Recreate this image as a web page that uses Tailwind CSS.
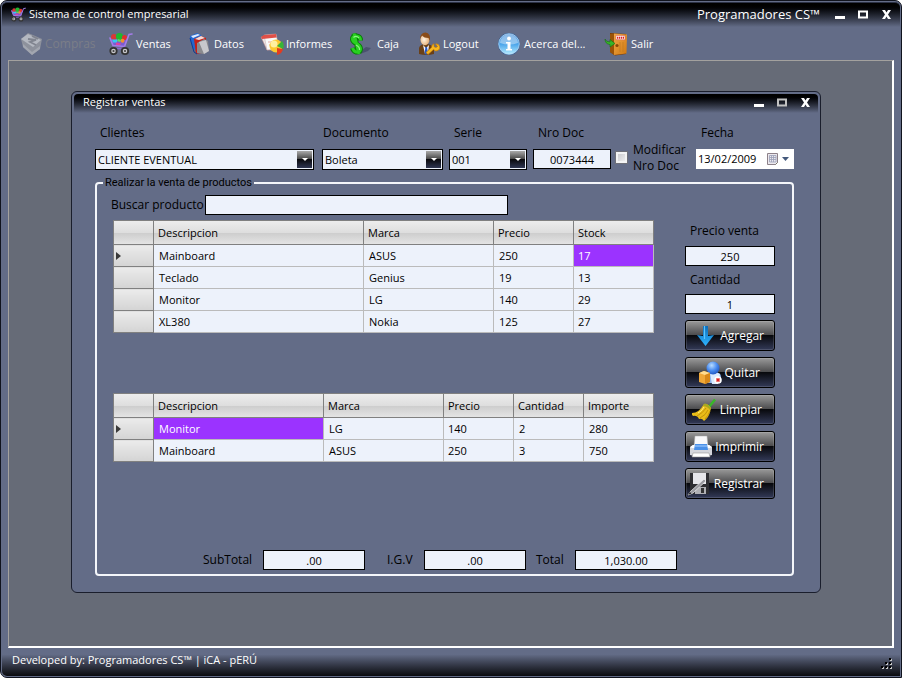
<!DOCTYPE html>
<html lang="es">
<head>
<meta charset="utf-8">
<title>Sistema de control empresarial</title>
<script src="https://cdn.jsdelivr.net/npm/@tailwindcss/browser@4"></script>
</head>
<body class="flex min-h-screen bg-white text-[12px] leading-4 text-black" style="font-family:'Open Sans','Noto Sans',sans-serif">
<svg class="absolute h-0 w-0" aria-hidden="true">
  <defs>
    <linearGradient id="gBlue" x1="0" y1="0" x2="0" y2="1"><stop offset="0" stop-color="#3a86d4"/><stop offset=".5" stop-color="#4aa4ea"/><stop offset="1" stop-color="#b4ecff"/></linearGradient>
    <linearGradient id="gArrow" x1="0" y1="0" x2="0" y2="1"><stop offset="0" stop-color="#0c6cb8"/><stop offset="1" stop-color="#2fb4ff"/></linearGradient>
    <linearGradient id="gDoor" x1="0" y1="0" x2="1" y2="1"><stop offset="0" stop-color="#f0a848"/><stop offset="1" stop-color="#d07810"/></linearGradient>
    <radialGradient id="gBall" cx=".4" cy=".3" r=".8"><stop offset="0" stop-color="#b8dcff"/><stop offset=".5" stop-color="#4a8cf0"/><stop offset="1" stop-color="#1448b8"/></radialGradient>
    <radialGradient id="gFace" cx=".4" cy=".5" r=".7"><stop offset="0" stop-color="#fff4e4"/><stop offset="1" stop-color="#e0a060"/></radialGradient>
    <symbol id="cart" viewBox="0 0 24 24">
      <path d="M1 6h18l-3.500 8.500-11.500-1z" fill="#7a5cd0"/>
      <circle cx="5" cy="5" r="3" fill="#d83838"/><circle cx="10.500" cy="4.500" r="3.600" fill="#20b830"/><circle cx="15.500" cy="5.500" r="2.600" fill="#e03030"/>
      <path d="M3 7.500h5v3H4z" fill="#38c8f0"/><circle cx="13.500" cy="8.800" r="2" fill="#f0902c"/><path d="M7 10.500l5 1-1 2-4-.5z" fill="#e040a0"/><path d="M9 7l3 1-1 2-3-1z" fill="#60d860"/>
      <path d="M23 2l-3 .5-4.500 12L4 13.500 1 6" fill="none" stroke="#a47ce8" stroke-width="1.600" stroke-linecap="round"/>
      <path d="M15.500 14.500l1 2H3" fill="none" stroke="#8a68d0" stroke-width="1.400"/>
      <circle cx="4.500" cy="19" r="3.200" fill="#c8c8cc" stroke="#333" stroke-width="1.800"/><circle cx="16" cy="19" r="3.200" fill="#c8c8cc" stroke="#333" stroke-width="1.800"/>
      <circle cx="4.500" cy="19" r="1.100" fill="#444"/><circle cx="16" cy="19" r="1.100" fill="#444"/>
    </symbol>
  </defs>
</svg>

<div class="flex flex-1 flex-col rounded-[7px] rounded-br-none border border-[#10131d] bg-[#636c87] p-px">
  <header class="flex h-[25px] items-center rounded-t-[5px] border-t border-[#2b3145] bg-linear-to-b from-black to-[#636c87] pr-1.5 pb-0.5 pl-[9px] text-white">
    <svg class="h-[15px] w-[15px]"><use href="#cart"/></svg>
    <h1 class="ml-[3px] flex-1 text-[11px]">Sistema de control empresarial</h1>
    <span class="text-[13px]">Programadores CS™</span>
    <button type="button" aria-label="Minimizar" class="ml-3 flex h-4 w-4 items-center justify-center"><svg class="h-[9px] w-[10px]" viewBox="0 0 10 9"><path d="M0 6h10v3H0z" fill="#fff"/></svg></button>
    <button type="button" aria-label="Maximizar" class="ml-[7px] flex h-4 w-4 items-center justify-center"><svg class="h-[9px] w-[10px]" viewBox="0 0 10 9"><path d="M1 1.500h8v6H1z" fill="none" stroke="#fff" stroke-width="2"/></svg></button>
    <button type="button" aria-label="Cerrar" class="ml-[7px] flex h-4 w-4 items-center justify-center"><svg class="h-[9px] w-[9px]" viewBox="0 0 9 9"><path d="M0 0h3l1.500 2.500L6 0h3L6 4.500 9 9H6L4.500 6.500 3 9H0l3-4.500z" fill="#fff"/></svg></button>
  </header>

  <nav aria-label="Principal" class="grid h-[33px] grid-cols-[89px_79px_72px_88px_68px_81px_107px_auto] items-center justify-start pl-[18px] text-[11px] text-white">
    <button type="button" disabled class="flex items-center gap-px text-[12px] text-[#7b7e88]">
      <svg class="h-6 w-6" viewBox="0 0 24 24"><path d="M1 7L8 1l5 2 9 4-2 10-8 6L3 15z" fill="#8d919c"/><path d="M1 7l7-5 13 6-8 7z" fill="#b4b8c1"/><path d="M3 12l9 8 8-6v3l-8 6-9-8z" fill="#a2a6b0"/><path d="M8 7l8 1-6 2 6 3M12 4l6 3" stroke="#80848f" stroke-width="1.800" fill="none"/></svg>
      Compras</button>
    <button type="button" class="flex items-center gap-[3px]"><svg class="h-6 w-6"><use href="#cart"/></svg>Ventas</button>
    <button type="button" class="flex items-center gap-[2px]">
      <svg class="h-6 w-6" viewBox="0 0 24 24"><path d="M2 4l7-3 4 2 1 2-3 14-6-2-3-9z" fill="#2268d0"/><path d="M3 4l7-2 2 1-7 3z" fill="#dfeaff"/><path d="M6 7l7-3 5 2v3l-4 12-6 1z" fill="#c42018"/><path d="M7 7l6-3 4 2-6 2z" fill="#f4dcd8"/><path d="M9 11l7-4 4 2 1 10-5 3-7-1z" fill="#8a8a8e"/><path d="M11 10l7-2 3 11-5 3z" fill="#c8c8cc"/><path d="M2 6l4 14 3 2" stroke="#103c90" stroke-width="1" fill="none"/></svg>
      Datos</button>
    <button type="button" class="flex items-center gap-[2px]">
      <svg class="h-6 w-6" viewBox="0 0 24 24"><path d="M1 5l6 13h8V5z" fill="#ece8e8" stroke="#c89090" stroke-width=".6"/><path d="M4 3l12-1 3 14-12 2z" fill="#fafafa" stroke="#c8a8a8" stroke-width=".5"/><path d="M1 5l3-2 12-1 .7 3.500-12 1.200L2 7z" fill="#e05048"/><path d="M8 10h7M9 13h4" stroke="#e8a8a0"/><circle cx="16" cy="14" r="6.500" fill="#fcc830"/><circle cx="14" cy="12" r="3.500" fill="#fff0a0"/><path d="M17 14l5-5q3 4 1 8z" fill="#38b438"/><path d="M17 16l6 1q-1 5-6 6z" fill="#e43c20"/></svg>
      Informes</button>
    <button type="button" class="flex items-center gap-[5px]">
      <svg class="h-6 w-6" viewBox="0 0 24 24"><path d="M10 21l8-6 5 1-3 3-8 3z" fill="#4a526e"/><path d="M12.500 8.500q0-4-4-4.500-4.500 0-4 3.500.5 2.500 4 4 4 2.500 4 5.500-.5 3.500-4.500 3Q5.500 19 4.500 16M6 1.500l5 20.500" fill="none" stroke="#087c08" stroke-width="5"/><path d="M12.500 8.500q0-4-4-4.500-4.500 0-4 3.500.5 2.500 4 4 4 2.500 4 5.500-.5 3.500-4.500 3Q5.500 19 4.500 16M6 1.500l5 20.500" fill="none" stroke="#28d020" stroke-width="3"/><path d="M11 6Q8 3 5.500 5.500M8 13q4 2 3.500 5" fill="none" stroke="#8cf880" stroke-width="1.200"/></svg>
      Caja</button>
    <button type="button" class="flex items-center gap-[3px]">
      <svg class="h-6 w-6" viewBox="0 0 24 24"><path d="M3 22V16q1-4 7-4t8 5v5q-8 2-15 0z" fill="#6a4018"/><path d="M7 13l3 3 3-3-1 9H9z" fill="#f4f4ff"/><path d="M9.500 15h1.500l1 6-2 2-1.500-2z" fill="#2058c8"/><ellipse cx="9" cy="7.500" rx="4.500" ry="5.700" fill="url(#gFace)"/><path d="M4 7q0-6 5.500-6.500Q15 1 14 9l-1.500-3Q8 6 6 3.500z" fill="#8a4c18"/><path d="M19.500 12a3.500 3.500 0 1 1-2 5.500l-5.500 5-2-2 5.500-5q0-3 2.500-3.800v3l2 .8 1.500-1z" fill="#f8b820" stroke="#c07808" stroke-width=".7"/></svg>
      Logout</button>
    <button type="button" class="flex items-center gap-[3px]">
      <svg class="h-6 w-6" viewBox="0 0 24 24"><circle cx="12" cy="12" r="11" fill="#2a5c98"/><circle cx="12" cy="12" r="10.300" fill="url(#gBlue)" stroke="#b8d8f4" stroke-width=".8"/><path d="M3 11a9 9 0 0 1 18 0q-9 3-18 0z" fill="#fff" opacity=".4"/><circle cx="12" cy="6.500" r="1.900" fill="#fff"/><path d="M9 10h4.500v7H15v1.500H9V17h1.500v-5.500H9z" fill="#fff"/></svg>
      Acerca del...</button>
    <button type="button" class="flex items-center gap-[3px]">
      <svg class="h-6 w-6" viewBox="0 0 24 24"><path d="M6 1l16 1v20l-11 1.500L6 20z" fill="#7c3c04"/><path d="M10 1.500l13 1-.5 19L10 23z" fill="url(#gDoor)"/><path d="M10 1.500L6 2v18l4 3z" fill="#9c5408"/><path d="M12 3.500l9 .3v4l-9-.2z" fill="#fff" stroke="#e06060" stroke-width=".6"/><path d="M13 5.700h7" stroke="#e02020" stroke-width="2" stroke-dasharray="1.300 .6"/><circle cx="13" cy="13.500" r="1.600" fill="#8a4808"/><path d="M16 10v10M19 10v10" stroke="#c07820" stroke-width=".7"/><path d="M1 7q1 3 5 3V7.500l5 4L6 15v-2.500Q1 12 1 7z" fill="#38b428" stroke="#147010" stroke-width=".6"/></svg>
      Salir</button>
  </nav>

  <main class="mx-1.5 flex-1 border-2 border-t border-l border-t-[#a3a19e] border-r-white border-b-white border-l-[#a3a19e] bg-[#666b77] pt-[30px] pr-[71px] pb-[52px] pl-[62px]">
    <section aria-label="Registrar ventas" class="rounded-[6px] border border-[#1a1e2c] bg-[#636c87]">
      <header class="mx-0.5 mt-0.5 flex h-[19px] items-start rounded-t-[4px] bg-linear-to-b from-black to-[#636c87] pr-[5px] pl-[9px] text-white">
        <h2 class="flex-1 text-[11px]">Registrar ventas</h2>
        <button type="button" aria-label="Minimizar" class="flex h-4 w-4 items-center justify-center"><svg class="h-[9px] w-[10px]" viewBox="0 0 10 9"><path d="M0 6h10v3H0z" fill="#fff"/></svg></button>
        <button type="button" aria-label="Maximizar" class="ml-[7px] flex h-4 w-4 items-center justify-center"><svg class="h-[9px] w-[10px]" viewBox="0 0 10 9"><path d="M1 1.500h8v6H1z" fill="none" stroke="#c2c2c2" stroke-width="2"/></svg></button>
        <button type="button" aria-label="Cerrar" class="ml-[7px] flex h-4 w-4 items-center justify-center"><svg class="h-[9px] w-[9px]" viewBox="0 0 9 9"><path d="M0 0h3l1.500 2.500L6 0h3L6 4.500 9 9H6L4.500 6.500 3 9H0l3-4.500z" fill="#fff"/></svg></button>
      </header>

      <form class="pr-[26px] pb-4 pl-[23px]">
        <div class="flex items-end pt-3">
          <div class="flex-1">
            <label for="clientes" class="mb-2 block pl-[5px]">Clientes</label>
            <div class="relative">
              <select id="clientes" class="block h-[21px] w-full appearance-none border border-black bg-[#edf2fb] pl-0.5 text-[11px]"><option>CLIENTE EVENTUAL</option></select>
              <svg class="pointer-events-none absolute top-0.5 right-0.5 h-[17px] w-[15px] bg-[linear-gradient(#aaa,#444_48%,#0a0a0e_50%,#2f3652)]" viewBox="0 0 15 17"><path d="M5 7h6L8 10z" fill="#fff"/></svg>
            </div>
          </div>
          <div class="ml-2 w-[121px]">
            <label for="documento" class="mb-2 block pl-px">Documento</label>
            <div class="relative">
              <select id="documento" class="block h-[21px] w-full appearance-none border border-black bg-[#edf2fb] pl-0.5 text-[11px]"><option>Boleta</option></select>
              <svg class="pointer-events-none absolute top-0.5 right-0.5 h-[17px] w-[15px] bg-[linear-gradient(#aaa,#444_48%,#0a0a0e_50%,#2f3652)]" viewBox="0 0 15 17"><path d="M5 7h6L8 10z" fill="#fff"/></svg>
            </div>
          </div>
          <div class="ml-1.5 w-[78px]">
            <label for="serie" class="mb-2 block pl-[5px]">Serie</label>
            <div class="relative">
              <select id="serie" class="block h-[21px] w-full appearance-none border border-black bg-[#edf2fb] pl-0.5 text-[11px]"><option>001</option></select>
              <svg class="pointer-events-none absolute top-0.5 right-0.5 h-[17px] w-[15px] bg-[linear-gradient(#aaa,#444_48%,#0a0a0e_50%,#2f3652)]" viewBox="0 0 15 17"><path d="M5 7h6L8 10z" fill="#fff"/></svg>
            </div>
          </div>
          <div class="ml-1.5 w-[78px] pb-px">
            <label for="nrodoc" class="mb-2 block pl-[5px]">Nro Doc</label>
            <input id="nrodoc" type="text" value="0073444" class="block h-5 w-full border border-black bg-[#edf2fb] text-center text-[11px]">
          </div>
          <div class="ml-1 flex w-[81px] items-start gap-[5px]">
            <input id="modificar" type="checkbox" class="mt-[9px] h-[13px] w-[13px] shrink-0 appearance-none border border-[#6f7078] bg-linear-to-br from-[#c4c4c8] to-[#f6f6f6] shadow-[inset_0_0_0_2px_#f4f4f4] checked:bg-[#9b33ff]">
            <label for="modificar" class="-mb-1">Modificar<br>Nro Doc</label>
          </div>
          <div class="w-[98px] pb-px">
            <label for="fecha" class="mb-2 block pl-[5px]">Fecha</label>
            <div class="flex h-5 items-center bg-white pr-1.5">
              <input id="fecha" type="text" value="13/02/2009" class="w-[68px] pl-[2px] text-[11px]">
              <button type="button" aria-label="Abrir calendario" class="ml-[3px] flex items-center gap-[3px]">
                <svg class="h-[13px] w-3" viewBox="0 0 12 13"><path d="M.5.500h10v9l-2 2h-8z" fill="#ece9ee" stroke="#8d8189"/><path d="M2.500 2.500h6.500v6.500H2.500zM4.500 2.500v6.500M6.500 2.500v6.500M2.500 4.500h6.500M2.500 6.500h6.500" fill="none" stroke="#9aa0b8" stroke-width=".8"/><path d="M8.500 11.500l2-2" stroke="#776"/></svg>
                <svg class="h-1 w-[7px]" viewBox="0 0 7 4"><path d="M0 0h7L3.500 4z" fill="#44597c"/></svg>
              </button>
            </div>
          </div>
        </div>

        <fieldset class="mt-[5px] rounded-[4px] border-2 border-[#f4f6fa] pb-1">
          <legend class="ml-1.5 px-0.5 text-[11px]" style="font-family:Roboto,'Open Sans',sans-serif">Realizar la venta de productos</legend>
          <div class="flex">
            <div class="flex-1 pl-4">
              <div class="mt-1 flex items-center">
                <label for="buscar" class="-ml-0.5 w-[94px] whitespace-nowrap">Buscar producto</label>
                <input id="buscar" type="text" class="h-5 w-[303px] border border-black bg-[#edf2fb] px-1 text-[11px]">
              </div>
              <table class="mt-[5px] w-full table-fixed border-collapse text-left text-[11px]">
                <colgroup><col class="w-10"><col class="w-[210px]"><col class="w-[130px]"><col class="w-20"><col class="w-20"></colgroup>
                <thead>
                  <tr class="h-6 bg-[linear-gradient(#ededed,#dedede_48%,#cdcdcd_50%,#e6e6e6)]">
                    <th class="border border-[#808080]"></th>
                    <th class="border border-[#808080] px-1 font-normal">Descripcion</th>
                    <th class="border border-[#808080] px-1 font-normal">Marca</th>
                    <th class="border border-[#808080] px-1 font-normal">Precio</th>
                    <th class="border border-[#808080] px-1 font-normal">Stock</th>
                  </tr>
                </thead>
                <tbody class="bg-[#edf2fb]">
                  <tr class="h-[22px]"><th class="border border-[#808080] bg-linear-to-b from-[#ebebeb] to-[#d4d4d4] pl-0.5"><svg class="h-2 w-[5px]" viewBox="0 0 5 8"><path d="M0 0l5 4-5 4z" fill="#3a3a3a"/></svg></th><td class="border border-[#bbb] px-[5px]">Mainboard</td><td class="border border-[#bbb] px-[5px]">ASUS</td><td class="border border-[#bbb] px-[5px]">250</td><td class="border border-[#bbb] bg-[#9b33ff] px-1 text-white">17</td></tr>
                  <tr class="h-[22px]"><th class="border border-[#808080] bg-linear-to-b from-[#ebebeb] to-[#d4d4d4]"></th><td class="border border-[#bbb] px-[5px]">Teclado</td><td class="border border-[#bbb] px-[5px]">Genius</td><td class="border border-[#bbb] px-[5px]">19</td><td class="border border-[#bbb] px-1">13</td></tr>
                  <tr class="h-[22px]"><th class="border border-[#808080] bg-linear-to-b from-[#ebebeb] to-[#d4d4d4]"></th><td class="border border-[#bbb] px-[5px]">Monitor</td><td class="border border-[#bbb] px-[5px]">LG</td><td class="border border-[#bbb] px-[5px]">140</td><td class="border border-[#bbb] px-1">29</td></tr>
                  <tr class="h-[22px]"><th class="border border-[#808080] bg-linear-to-b from-[#ebebeb] to-[#d4d4d4]"></th><td class="border border-[#bbb] px-[5px]">XL380</td><td class="border border-[#bbb] px-[5px]">Nokia</td><td class="border border-[#bbb] px-[5px]">125</td><td class="border border-[#bbb] px-1">27</td></tr>
                </tbody>
              </table>
              <table class="mt-[60px] w-full table-fixed border-collapse text-left text-[11px]">
                <colgroup><col class="w-10"><col class="w-[170px]"><col class="w-[120px]"><col class="w-[70px]"><col class="w-[70px]"><col class="w-[70px]"></colgroup>
                <thead>
                  <tr class="h-6 bg-[linear-gradient(#ededed,#dedede_48%,#cdcdcd_50%,#e6e6e6)]">
                    <th class="border border-[#808080]"></th>
                    <th class="border border-[#808080] px-1 font-normal">Descripcion</th>
                    <th class="border border-[#808080] px-1 font-normal">Marca</th>
                    <th class="border border-[#808080] px-1 font-normal">Precio</th>
                    <th class="border border-[#808080] px-1 font-normal">Cantidad</th>
                    <th class="border border-[#808080] px-1 font-normal">Importe</th>
                  </tr>
                </thead>
                <tbody class="bg-[#edf2fb]">
                  <tr class="h-[22px]"><th class="border border-[#808080] bg-linear-to-b from-[#ebebeb] to-[#d4d4d4] pl-0.5"><svg class="h-2 w-[5px]" viewBox="0 0 5 8"><path d="M0 0l5 4-5 4z" fill="#3a3a3a"/></svg></th><td class="border border-[#bbb] bg-[#9b33ff] px-[5px] text-white">Monitor</td><td class="border border-[#bbb] px-[5px]">LG</td><td class="border border-[#bbb] px-1">140</td><td class="border border-[#bbb] px-[5px]">2</td><td class="border border-[#bbb] px-[5px]">280</td></tr>
                  <tr class="h-[22px]"><th class="border border-[#808080] bg-linear-to-b from-[#ebebeb] to-[#d4d4d4]"></th><td class="border border-[#bbb] px-[5px]">Mainboard</td><td class="border border-[#bbb] px-[5px]">ASUS</td><td class="border border-[#bbb] px-1">250</td><td class="border border-[#bbb] px-[5px]">3</td><td class="border border-[#bbb] px-[5px]">750</td></tr>
                </tbody>
              </table>
            </div>

            <div class="ml-[31px] flex w-[107px] flex-col pt-8 pr-[17px]">
              <label for="precio" class="mb-[7px] pl-[5px]">Precio venta</label>
              <input id="precio" type="text" value="250" class="h-5 w-full border border-black bg-[#edf2fb] text-center text-[11px]">
              <label for="cantidad" class="mt-[6px] mb-[6px] pl-[5px]">Cantidad</label>
              <input id="cantidad" type="text" value="1" class="h-5 w-full border border-black bg-[#edf2fb] text-center text-[11px]">
              <div class="mt-1.5 flex flex-col gap-1.5 text-[12px] text-white">
                <button type="button" class="flex h-[31px] items-center justify-end gap-0.5 rounded-[3px] border border-black bg-[linear-gradient(#9a9a9a,#4c4c4e_48%,#08090d_50%,#333a58)] pr-2.5 shadow-[inset_0_0_0_1px_#ffffff22]">
                  <svg class="h-6 w-6" viewBox="0 0 24 24"><path d="M9 2h5v10l6-1-8.500 11L3 11l6 1z" fill="url(#gArrow)"/><path d="M10.500 2v13" stroke="#5cc4ff" stroke-width="1.200"/></svg>Agregar</button>
                <button type="button" class="flex h-[31px] items-center justify-end gap-0.5 rounded-[3px] border border-black bg-[linear-gradient(#9a9a9a,#4c4c4e_48%,#08090d_50%,#333a58)] pr-3.5 shadow-[inset_0_0_0_1px_#ffffff22]">
                  <svg class="h-6 w-6" viewBox="0 0 24 24"><path d="M8 22V15q1-4 8-4t7 5v6z" fill="#8cb4f0"/><path d="M12 12l5-1 5 2-2 10h-6z" fill="#dcebff"/><circle cx="15" cy="7" r="6.500" fill="url(#gBall)"/><path d="M1 12l5-2 6 2v9l-5 2-6-2z" fill="#f0a838"/><path d="M1 12l5-2 6 2-5 2z" fill="#ffdc90"/><path d="M7 14v9l5-2v-9z" fill="#d88818"/><circle cx="20" cy="19" r="3.800" fill="#fff"/><path d="M18.500 17.500l3 3m0-3l-3 3" stroke="#e02020" stroke-width="1.700"/></svg>Quitar</button>
                <button type="button" class="flex h-[31px] items-center justify-end gap-1 rounded-[3px] border border-black bg-[linear-gradient(#9a9a9a,#4c4c4e_48%,#08090d_50%,#333a58)] pr-3 shadow-[inset_0_0_0_1px_#ffffff22]">
                  <svg class="h-6 w-6" viewBox="0 0 24 24"><path d="M23 1.500L17 9" stroke="#38b828" stroke-width="2.500"/><path d="M12 6q3-1 7 4l-1 4q-1 5-6 9-2-3-5-2-2-4-6-3-2-2-1-3 7 0 12-9z" fill="#e8bc18"/><path d="M12 6q3-1 7 4l-1 2q-3-4-7-4z" fill="#a8a820"/><path d="M14 10q-3 5-9 8m11-6q-2 5-8 8m10-7q-2 5-5 8" stroke="#b88808" fill="none" stroke-width=".8"/><path d="M12 9q-2 4-6 6" stroke="#fff088" fill="none"/></svg>Limpiar</button>
                <button type="button" class="flex h-[31px] items-center justify-end gap-0.5 rounded-[3px] border border-black bg-[linear-gradient(#9a9a9a,#4c4c4e_48%,#08090d_50%,#333a58)] pr-2.5 shadow-[inset_0_0_0_1px_#ffffff22]">
                  <svg class="h-6 w-6" viewBox="0 0 24 24"><path d="M6 1h12l1 10H5z" fill="#f8f8fa" stroke="#aaa" stroke-width=".5"/><path d="M1 12l3-2h16l3 2v8q-11 3-22 0z" fill="#d4d6dc"/><path d="M1 12l3-2h16l3 2-2 1H3z" fill="#fff"/><path d="M6 9h12l1 6H5z" fill="#4a90e8"/><path d="M6 11h12" stroke="#a8d0ff"/><path d="M4 18h16l1 4H3z" fill="#fff" stroke="#999" stroke-width=".6"/></svg>Imprimir</button>
                <button type="button" class="flex h-[31px] items-center justify-end gap-[3px] rounded-[3px] border border-black bg-[linear-gradient(#9a9a9a,#4c4c4e_48%,#08090d_50%,#333a58)] pr-2.5 shadow-[inset_0_0_0_1px_#ffffff22]">
                  <svg class="h-6 w-6" viewBox="0 0 24 24"><path d="M3 1h19v21H5l-2-2z" fill="#2e2e32"/><path d="M6 1h13v11H6z" fill="#e6e6ea"/><path d="M8 15h11v7H8z" fill="#b0b0b4"/><path d="M14 16h3v5h-3z" fill="#333"/><path d="M1 23l3-4L17 7l2 2L6 21z" fill="#9a9aa0" stroke="#f4f4f4" stroke-width=".7"/><path d="M1 23l2-3 1.500 1.500z" fill="#222"/></svg>Registrar</button>
              </div>
            </div>
          </div>

          <div class="mt-[51px] flex items-center pl-[106px]">
            <label for="subtotal" class="w-[60px]">SubTotal</label>
            <input id="subtotal" type="text" value=".00" class="h-5 w-[102px] border border-black bg-[#edf2fb] text-center text-[11px]">
            <label for="igv" class="ml-[22px] w-[37px]">I.G.V</label>
            <input id="igv" type="text" value=".00" class="h-5 w-[102px] border border-black bg-[#edf2fb] text-center text-[11px]">
            <label for="total" class="ml-2.5 w-[39px]">Total</label>
            <input id="total" type="text" value="1,030.00" class="h-5 w-[102px] border border-black bg-[#edf2fb] text-center text-[11px]">
          </div>
        </fieldset>
      </form>
    </section>
  </main>

  <footer class="mt-1 flex h-6 items-start justify-between rounded-bl-[5px] bg-linear-to-b from-[#636c87] from-10% to-[#0b0c10] pr-2 pl-2.5 text-[11px] text-white">
    <p>Developed by: Programadores CS™ | iCA - pERÚ</p>
    <svg class="mt-1.5 h-[11px] w-[11px]" viewBox="0 0 11 11"><path d="M9 1h2v2H9zM5 5h2v2H5zM9 5h2v2H9zM1 9h2v2H1zM5 9h2v2H5zM9 9h2v2H9z" fill="#c8c8c8"/><path d="M8 0h2v2H8zM4 4h2v2H4zM8 4h2v2H8zM0 8h2v2H0zM4 8h2v2H4zM8 8h2v2H8z" fill="#000"/></svg>
  </footer>
</div>
</body>
</html>
